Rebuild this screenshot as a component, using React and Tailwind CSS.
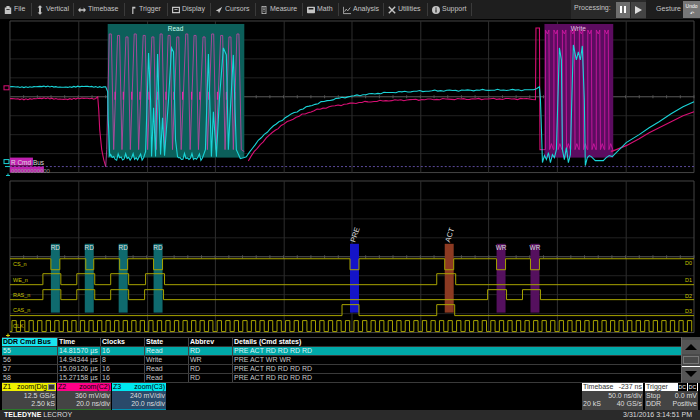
import React from 'react'

const gridX = [9, 78, 147, 215, 284, 352, 421, 489, 558, 627, 695]

const noise = (x) => Math.sin(x * 1.7) + Math.sin(x * 3.3 + 1)
const toPath = (pts) => 'M' + pts.map(([x, y]) => `${x.toFixed(1)} ${y.toFixed(1)}`).join('L')

const range = (from, to, step, fn) => {
  const out = []
  for (let x = from; x <= to; x += step) out.push([x, fn(x)])
  return out
}

const cyanRead = [
  [105, 87], [107, 92], [107.5, 120], [108, 130], [109, 157],
  ...range(110, 143, 1.5, (x) => 158 + noise(x) * 2.2),
  [145, 152], [148, 53], [150, 100], [151, 157], [153, 108], [155, 157], [157, 54], [160, 155], [162, 118], [164, 156],
  [168, 100], [171, 48], [173, 52], [175, 140], [177, 157],
  ...range(178, 203, 1.5, (x) => 158 + noise(x) * 2.2),
  [205, 150], [208, 54], [211, 157], [213, 112], [216, 157], [219, 100], [223, 48], [226, 55], [228, 150], [230, 110],
  [233, 55], [236, 150], [240, 159], [244, 158],
]

const cyanWrite = [
  [537, 89], [540, 87], [541, 100], [542, 130], [543, 163],
  [545, 156], [547, 160], [549, 153], [551, 163], [553, 155], [555, 158], [557, 150], [560, 48], [562, 60], [563, 150],
  [565, 160], [567, 148], [569, 163], [571, 155], [573, 80], [574, 45], [577, 60], [579, 52], [581, 60], [583, 46], [585, 100], [586, 166],
  [588, 158], [590, 156], [592, 157], [594, 159], [596, 161], [600, 161], [604, 161], [607, 158], [610, 156], [613, 157],
]

const cyanPath = toPath([
  ...range(9, 104, 2, (x) => 87 + noise(x) * 0.4),
  ...cyanRead,
  ...range(246, 535, 3, (x) => 90 + 70 * Math.exp(-(x - 244) / 45) + noise(x) * 0.4),
  ...cyanWrite,
  [627, 143], [640, 135], [650, 128], [660, 122], [672, 114], [684, 107], [695, 102],
])

const magentaStart = toPath([
  ...range(9, 95, 2, (x) => 99 + noise(x) * 0.5),
  [97, 97], [98, 110], [99, 130], [101, 150], [103, 160], [105, 167],
])

const magentaAfter = toPath([
  ...range(248, 535, 3, (x) => 99 + 62 * Math.exp(-(x - 248) / 40) + noise(x) * 0.4),
  [536, 100], [536.5, 28], [540, 28], [540.5, 150], [544, 150],
])

const magentaTail = toPath([[612, 152], [627, 146], [640, 139], [650, 133], [660, 128], [672, 122], [684, 116], [695, 112]])

const readPeaks = [110, 118.3, 126.7, 135, 144, 152.7, 161, 169, 177.7, 186.7, 195, 204, 212.7, 221.7, 230, 238]
const readPath = toPath([
  [105, 167], [106, 150],
  ...readPeaks.flatMap((p, i) => [[p - 1.4, 34 + (i % 3) * 1.5], [p + 0.6, 34 + (i % 3) * 1.5], [p + 3, 150]]),
  [244, 152],
])

const writePeaks = [546, 554.5, 563, 571.5, 580, 588.5, 597, 605.5]
const writePath = toPath([
  [544, 150],
  ...writePeaks.flatMap((p) => [[p, 150], [p, 30], [p + 2, 34], [p + 3.5, 30], [p + 4.2, 150], [p + 6, 144], [p + 8, 150]]),
  [612, 152],
])

const pulses = (base, top, spans) => {
  const pts = [[9, base]]
  spans.forEach(([a, b]) => pts.push([a, base], [a, top], [b, top], [b, base]))
  pts.push([695, base])
  return toPath(pts)
}

const clockPath = () => {
  const pts = [[9, 332]]
  for (let x = 11; x < 695; x += 8.575) pts.push([x, 332], [x, 321], [x + 4.3, 321], [x + 4.3, 332])
  return toPath(pts)
}

const digital = [
  pulses(259, 270, [[50, 59], [85, 93], [119, 127], [153, 162], [350, 359], [445, 454], [497, 506], [531, 540]]),
  pulses(285, 274, [[42, 60], [76, 94], [110, 128], [145, 164], [437, 456]]),
  pulses(300, 290, [[42, 60], [76, 94], [110, 128], [144, 163], [488, 507], [523, 541]]),
  pulses(316, 305, [[342, 359], [437, 455]]),
  clockPath(),
]

const marks = [
  { x: 50, w: 9, fill: '#0f6a6e', label: 'RD' },
  { x: 84, w: 9, fill: '#0f6a6e', label: 'RD' },
  { x: 118, w: 9, fill: '#0f6a6e', label: 'RD' },
  { x: 153, w: 9, fill: '#0f6a6e', label: 'RD' },
  { x: 350, w: 9, fill: '#1414c8', label: 'PRE', rotate: true },
  { x: 445, w: 9, fill: '#8c3a22', label: 'ACT', rotate: true },
  { x: 497, w: 9, fill: '#55105e', label: 'WR' },
  { x: 531, w: 9, fill: '#55105e', label: 'WR' },
]

const Grid = ({ top, bottom, center }) => {
  const ys = []
  for (let y = top; y <= bottom; y += 19) ys.push(y)
  const ticks = []
  for (let x = 22.7; x < 695; x += 13.72) ticks.push(x)
  return (
    <g>
      {ys.map((y) => (
        <line key={y} x1="9" x2="695" y1={y} y2={y} stroke={y === center ? '#5a5a5a' : y === top || y === bottom ? '#444' : '#222'} />
      ))}
      {gridX.map((x) => (
        <line key={x} x1={x} x2={x} y1={top} y2={bottom} stroke={x === 9 || x === 695 ? '#444' : '#2e2e2e'} />
      ))}
      {ticks.map((x) => (
        <line key={x} x1={x} x2={x} y1={center - 1.5} y2={center + 1.5} stroke="#555" />
      ))}
    </g>
  )
}

const TopScope = () => (
  <svg viewBox="0 19 700 157" className="block w-[700px] h-[157px]">
    <Grid top={21} bottom={173} center={97} />
    <line x1="9" x2="695" y1="167" y2="167" stroke="#5a4a9a" strokeDasharray="2 2" />
    <rect x="107" y="24" width="137" height="134" fill="#0c5f5a" />
    <rect x="545" y="24" width="69" height="134" fill="#5c0c60" />
    <text x="175" y="31" fontSize="6.500" fill="#cfe" textAnchor="middle">Read</text>
    <text x="579" y="31" fontSize="6.500" fill="#e8c8e8" textAnchor="middle">Write</text>
    <path d={magentaStart} fill="none" stroke="#d80f74" strokeWidth="1.100" />
    <path d={readPath} fill="none" stroke="#b548a0" strokeWidth="0.900" />
    {readPeaks.slice(0, 15).map((p) => (
      <line key={p} x1={p + 4.4} x2={p + 4.4} y1="92" y2="100" stroke="#e82cac" strokeWidth="1.200" />
    ))}
    <path d={magentaAfter} fill="none" stroke="#d80f74" strokeWidth="1.100" />
    <path d={writePath} fill="none" stroke="#cc18a0" strokeWidth="0.900" />
    <path d={magentaTail} fill="none" stroke="#d80f74" strokeWidth="1.100" />
    <path d={cyanPath} fill="none" stroke="#1ad4d8" strokeWidth="1.100" />
    <rect x="3" y="86" width="5" height="4" fill="none" stroke="#d80f74" />
    <rect x="3" y="160" width="5" height="4" fill="none" stroke="#1ad4d8" />
    <line x1="4" x2="9" y1="167" y2="167" stroke="#1ad4d8" />
    <rect x="9" y="158" width="23" height="8" fill="#c020b0" />
    <text x="10" y="165" fontSize="6.500" fill="#ddd">R Cmd Bus</text>
    <rect x="9" y="167" width="34" height="6" fill="#c020b0" />
    <text x="10" y="173" fontSize="6" fill="#999" letterSpacing="-0.100">000000000000</text>
    <path d="M5 176h4M7 174v4" stroke="#1ad4d8" />
  </svg>
)

const BottomScope = () => (
  <svg viewBox="0 176 700 162" className="block w-[700px] h-[162px]">
    <Grid top={181} bottom={333} center={257} />
    {marks.map((m) => (
      <rect key={m.x} x={m.x} y="244" width={m.w} height="69" fill={m.fill} />
    ))}
    {digital.map((d, i) => (
      <path key={i} d={d} fill="none" stroke="#a8a400" strokeWidth="1" />
    ))}
    {marks.map((m) =>
      m.rotate ? (
        <text key={m.x} x={m.x + 5} y="243" fontSize="7.500" fill="#ddd" transform={`rotate(-72 ${m.x + 5} 243)`}>{m.label}</text>
      ) : (
        <text key={m.x} x={m.x + 4.5} y="250" fontSize="6.500" fill="#ddd" textAnchor="middle">{m.label}</text>
      ),
    )}
    {['CS_n', 'WE_n', 'RAS_n', 'CAS_n', 'CLK'].map((t, i) => (
      <text key={t} x="12" y={[266, 282, 297, 312, 328][i]} fontSize="5.500" fill="#c8c400">{t}</text>
    ))}
    {['D0', 'D1', 'D2', 'D3'].map((t, i) => (
      <text key={t} x="686" y={[265, 282, 298, 313][i]} fontSize="5.500" fill="#c8c400">{t}</text>
    ))}
    <path d="M5 336h4M7 334v4" stroke="#d8d400" />
  </svg>
)

const iconProps = { viewBox: '0 0 10 12', className: 'w-[8px] h-[10px] shrink-0', fill: 'currentColor' }

const icons = {
  file: <svg {...iconProps}><path d="M1 3h8v8H1zM3 1h4v2H3z" /><path d="M3 5h4v1H3z" fill="#1e1e1e" /></svg>,
  vertical: <svg {...iconProps}><path d="M5 0l3 3H6.200v6H8l-3 3-3-3h1.800V3H2z" /></svg>,
  timebase: <svg {...iconProps}><path d="M0 6l3-3v2h4V3l3 3-3 3V7H3v2z" /></svg>,
  trigger: <svg {...iconProps}><path d="M4 11V2h4v2H5.500v7z" /></svg>,
  display: <svg {...iconProps}><path fillRule="evenodd" d="M0 2h10v8H0zM1.500 3.500v5h7v-5z" /><path d="M3 5h4v1H3z" /></svg>,
  cursors: <svg {...iconProps}><path d="M9 2L5 10 4 7.500 1 7z" /></svg>,
  measure: <svg {...iconProps}><path fillRule="evenodd" d="M2 1h6v10H2zM3 2v8h4V2z" /><path d="M4 3h2v1H4zM4 5h2v1H4zM4 7h2v1H4z" /></svg>,
  math: <svg {...iconProps}><path fillRule="evenodd" d="M1 2h8q1 0 1 1v6q0 1-1 1H1q-1 0-1-1V3q0-1 1-1zM2 3.500v2h6v-2z" /></svg>,
  analysis: <svg {...iconProps} fill="none" stroke="currentColor"><path d="M.5 2v8.500H10M2 8l2-3 2 2 3-4" /></svg>,
  utilities: <svg {...iconProps} fill="none" stroke="currentColor" strokeWidth="1.800"><path d="M1 2l8 8M9 2l-8 8" /></svg>,
  support: <svg {...iconProps}><path fillRule="evenodd" d="M5 1a5 5 0 110 10A5 5 0 015 1zM4.300 3v1.300h1.400V3zM4.300 5.200V9h1.400V5.200z" /></svg>,
}

const menu = [
  { label: 'File', icon: 'file', width: 'w-[32px]' },
  { label: 'Vertical', icon: 'vertical', width: 'w-[42px]' },
  { label: 'Timebase', icon: 'timebase', width: 'w-[51px]' },
  { label: 'Trigger', icon: 'trigger', width: 'w-[43px]' },
  { label: 'Display', icon: 'display', width: 'w-[43px]' },
  { label: 'Cursors', icon: 'cursors', width: 'w-[45px]' },
  { label: 'Measure', icon: 'measure', width: 'w-[47px]' },
  { label: 'Math', icon: 'math', width: 'w-[36px]' },
  { label: 'Analysis', icon: 'analysis', width: 'w-[45px]' },
  { label: 'Utilities', icon: 'utilities', width: 'w-[44px]' },
  { label: 'Support', icon: 'support', width: 'w-[44px]' },
]

const Toolbar = () => (
  <div className="flex items-stretch h-[19px] bg-[#1e1e1e] text-[#c4c4c4] text-[7px]">
    {menu.map((m) => (
      <div key={m.label} className={`flex items-center gap-[2px] pl-[4px] my-[3px] border-r border-[#3a3a3a] ${m.width}`}>
        {icons[m.icon]}
        <span>{m.label}</span>
      </div>
    ))}
    <div className="flex items-center gap-[2px] ml-auto">
      <div className="flex items-center gap-[1px] h-[19px] pl-[3px] bg-[#2a2a2a] w-[75px]">
        <span className="mr-[4px] -mt-[3px]">Processing:</span>
        <div className="flex items-center justify-center gap-[2px] w-[15px] h-[16px] bg-[#6e6e6e]">
          <div className="w-[2px] h-[7px] bg-white" />
          <div className="w-[2px] h-[7px] bg-white" />
        </div>
        <div className="flex items-center justify-center w-[15px] h-[16px] bg-[#444]">
          <div className="w-0 h-0 border-y-[4px] border-y-transparent border-l-[7px] border-l-[#ddd]" />
        </div>
      </div>
      <span className="ml-[8px]">Gesture</span>
      <div className="flex flex-col items-center justify-center w-[17px] h-[17px] bg-[#777] text-white text-[5px] leading-[7px]">
        <span>Undo</span>
        <span>↶</span>
      </div>
    </div>
  </div>
)

const rows = [
  { id: '55', time: '14.81570 µs', clocks: '16', state: 'Read', abbrev: 'RD', details: 'PRE ACT RD RD RD RD', active: true },
  { id: '56', time: '14.94344 µs', clocks: '8', state: 'Write', abbrev: 'WR', details: 'PRE ACT WR WR' },
  { id: '57', time: '15.09126 µs', clocks: '16', state: 'Read', abbrev: 'RD', details: 'PRE ACT RD RD RD RD' },
  { id: '58', time: '15.27158 µs', clocks: '16', state: 'Read', abbrev: 'RD', details: 'PRE ACT RD RD RD RD' },
]

const colClass = 'grid grid-cols-[55px_43px_44px_44px_44px_1fr]'

const Table = () => (
  <div className="flex h-[46px] pl-[2px]">
    <div className="w-[679px] text-[7px] leading-[8px] border-t border-[#444]">
      <div className={`${colClass} h-[9px] text-white font-bold border-b border-[#333]`}>
        <div className="bg-[#19e6f0] text-black pl-[1px]">DDR Cmd Bus</div>
        <div className="pl-[1px] border-l border-[#444]">Time</div>
        <div className="pl-[1px] border-l border-[#444]">Clocks</div>
        <div className="pl-[1px] border-l border-[#444]">State</div>
        <div className="pl-[1px] border-l border-[#444]">Abbrev</div>
        <div className="pl-[1px] border-l border-[#444]">Details (Cmd states)</div>
      </div>
      {rows.map((r) => (
        <div key={r.id} className={`${colClass} h-[9px] border-b border-[#3a3a3a] ${r.active ? 'bg-[#00a8a8] text-[#d8f4f4]' : 'text-[#c8c8c8]'}`}>
          <div className="pl-[1px]">{r.id}</div>
          <div className="pl-[1px] border-l border-[#444]">{r.time}</div>
          <div className="pl-[1px] border-l border-[#444]">{r.clocks}</div>
          <div className="pl-[1px] border-l border-[#444]">{r.state}</div>
          <div className="pl-[1px] border-l border-[#444]">{r.abbrev}</div>
          <div className="pl-[1px] border-l border-[#444]">{r.details}</div>
        </div>
      ))}
    </div>
    <div className="flex flex-col w-[19px] bg-[#4a4a4a] border-l border-[#666]">
      <div className="flex items-center justify-center h-[14px] mt-[3px] bg-[#555]">
        <div className="w-0 h-0 border-x-[6px] border-x-transparent border-b-[6px] border-b-black" />
      </div>
      <div className="h-[8px] mx-[1px] my-[2px] border border-[#777]" />
      <div className="flex items-center justify-center h-[14px] bg-[#555] border-t border-white">
        <div className="w-0 h-0 border-x-[6px] border-x-transparent border-t-[6px] border-t-black" />
      </div>
    </div>
  </div>
)

const Zoom = ({ name, source, head, frame, body, lines, badge }) => (
  <div className={`flex flex-col w-[54px] border-b ${frame} text-[7px] leading-[8px]`}>
    <div className={`flex justify-between h-[8px] px-[1px] text-black ${head}`}>
      <span>{name}</span>
      <span className="flex items-center gap-[1px]">
        {source}
        {badge && <span className="w-[7px] h-[6px] bg-[#333] border border-[#888]" />}
      </span>
    </div>
    <div className={`flex-1 pr-[1px] pt-[1px] text-right text-[#ddd] ${body}`}>
      {lines.map((l) => <div key={l}>{l}</div>)}
    </div>
  </div>
)

const Descriptors = () => (
  <div className="flex justify-between h-[27px] pl-[2px] pr-[2px] text-[7px] leading-[8px]">
    <div className="flex gap-[1px]">
      <Zoom name="Z1" source="zoom(Dig" badge head="bg-[#f0f000]" frame="border-[#2a7a2a]" body="bg-[#444]" lines={['12.5 GS/s', '2.50 kS']} />
      <Zoom name="Z2" source="zoom(C2)" head="bg-[#ff0088]" frame="border-[#2a7a2a]" body="bg-[#444]" lines={['360 mV/div', '20.0 ns/div']} />
      <Zoom name="Z3" source="zoom(C3)" head="bg-[#00e8f0]" frame="border-[#0090b0]" body="bg-[#2a4a6a]" lines={['240 mV/div', '20.0 ns/div']} />
    </div>
    <div className="flex gap-[2px]">
      <div className="flex flex-col w-[61px]">
        <div className="flex justify-between h-[8px] px-[1px] bg-white text-[#333]">
          <span>Timebase</span>
          <span>-237 ns</span>
        </div>
        <div className="flex-1 px-[1px] pt-[1px] bg-[#444] text-[#ddd]">
          <div className="text-right">50.0 ns/div</div>
          <div className="flex justify-between"><span>20 kS</span><span>40 GS/s</span></div>
        </div>
      </div>
      <div className="flex flex-col w-[53px]">
        <div className="flex justify-between h-[8px] px-[1px] bg-white text-[#333]">
          <span>Trigger</span>
          <span className="flex gap-[1px] text-[5px] text-white">
            <span className="bg-black px-[1px]">DC</span>
            <span className="bg-black px-[1px]">DC</span>
          </span>
        </div>
        <div className="flex-1 px-[1px] pt-[1px] bg-[#444] text-[#ddd]">
          <div className="flex justify-between"><span>Stop</span><span>0.0 mV</span></div>
          <div className="flex justify-between"><span>DDR</span><span>Positive</span></div>
        </div>
      </div>
    </div>
  </div>
)

const Footer = () => (
  <div className="flex items-center justify-between h-[10px] pl-[4px] pr-[8px] bg-[#2a2a2a] text-[7px] text-[#ddd]">
    <span><span className="font-bold text-white">TELEDYNE</span> LECROY</span>
    <span>3/31/2016 3:14:51 PM</span>
  </div>
)

export default function App() {
  return (
    <div className="flex flex-col w-[700px] h-[420px] overflow-hidden bg-black font-['Liberation_Sans',Arial,sans-serif]">
      <Toolbar />
      <TopScope />
      <BottomScope />
      <Table />
      <Descriptors />
      <Footer />
    </div>
  )
}
